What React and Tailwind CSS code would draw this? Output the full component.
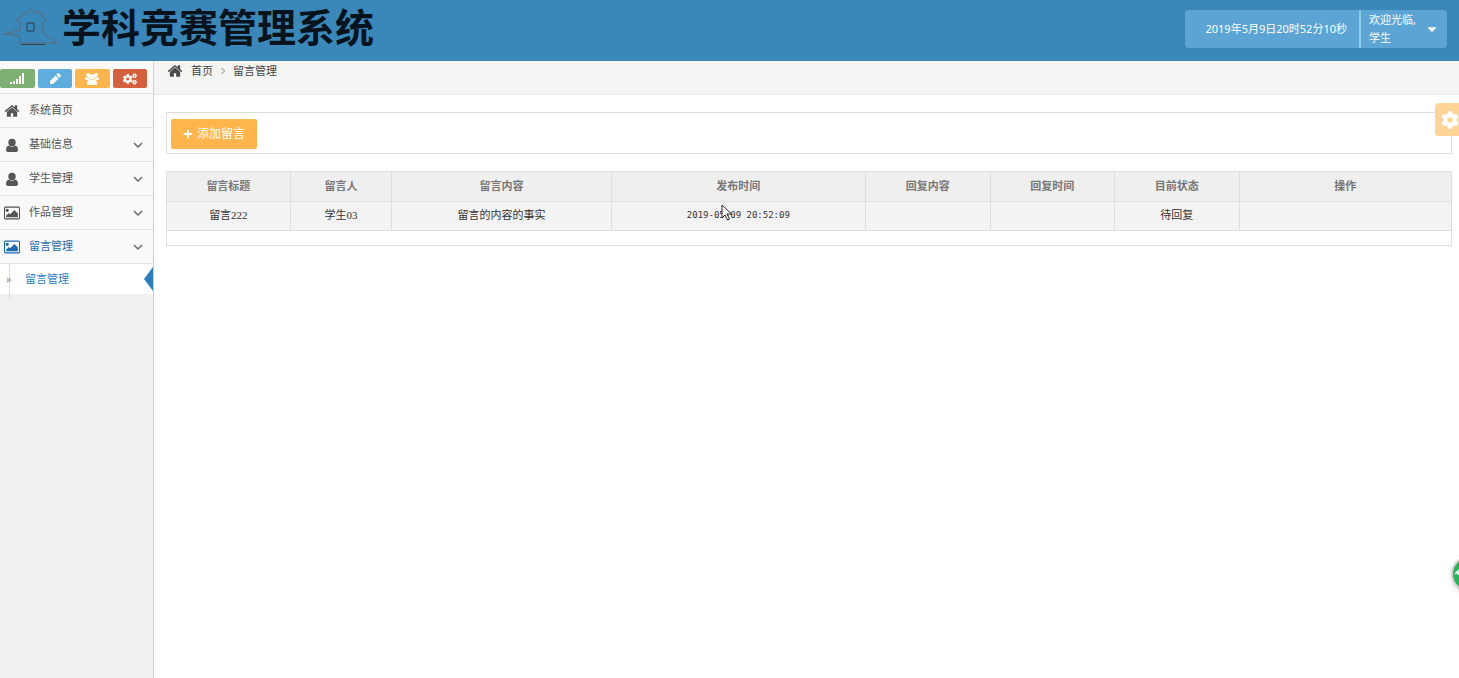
import React from "react";
import { FaCogs, FaCog, FaPlus, FaCaretDown } from "react-icons/fa";

const HomeIcon = ({ className }) => (
  <svg viewBox="0 0 1792 1792" fill="currentColor" className={className} aria-hidden="true">
    <path d="M1472 992v480q0 26-19 45t-45 19h-384v-384h-256v384h-384q-26 0-45-19t-19-45v-480q0-1 .5-3t.5-3l575-474 575 474q1 2 1 6zm223-69l-62 74q-8 9-21 11h-3q-13 0-21-7l-692-577-692 577q-12 8-24 7-13-2-21-11l-62-74q-8-10-7-23.5t11-21.5l719-599q32-26 76-26t76 26l244 204v-195q0-14 9-23t23-9h192q14 0 23 9t9 23v408l219 182q10 8 11 21.5t-7 23.5z" />
  </svg>
);

const PictureIcon = ({ className }) => (
  <svg viewBox="0 128 1920 1536" fill="currentColor" className={className} aria-hidden="true">
    <path d="M576 576q0 80-56 136t-136 56-136-56-56-136 56-136 136-56 136 56 56 136zm1088 384v448h-1408v-192l320-320 160 160 512-512zm96-704h-1600q-13 0-22.500 9.500t-9.500 22.500v1216q0 13 9.500 22.500t22.500 9.500h1600q13 0 22.500-9.500t9.500-22.500v-1216q0-13-9.500-22.500t-22.500-9.500zm160 32v1216q0 66-47 113t-113 47h-1600q-66 0-113-47t-47-113v-1216q0-66 47-113t113-47h1600q66 0 113 47t47 113z" />
  </svg>
);

const UserIcon = ({ className }) => (
  <svg viewBox="0 0 16 16" fill="currentColor" className={className} aria-hidden="true">
    <circle cx="8" cy="5.500" r="3.700" />
    <path d="M5 8.500Q2 9 2 13q0 2 2 2h8q2 0 2-2 0-4-3-4.500-3 2.500-6 0z" />
  </svg>
);

const SignalIcon = ({ className }) => (
  <svg viewBox="0 0 14 14" fill="currentColor" className={className} aria-hidden="true">
    <path d="M0 10h2v2H0zM3 9h2v3H3zM6 7h2v5H6zM9 4h2v8H9zM12 1h2v11h-2z" />
  </svg>
);

const PencilIcon = ({ className }) => (
  <svg viewBox="0 0 14 14" fill="currentColor" className={className} aria-hidden="true">
    <path d="M2 9l5.500-5.500 3 3L5 12H2zM8.300 2.700 9.600 1.400q.7-.6 1.400 0l1.600 1.600q.6.7 0 1.400l-1.300 1.300z" />
  </svg>
);

const GroupIcon = ({ className }) => (
  <svg viewBox="0 0 14 14" fill="currentColor" className={className} aria-hidden="true">
    <circle cx="3" cy="3" r="2" />
    <circle cx="11" cy="3" r="2" />
    <circle cx="7" cy="5" r="2.700" />
    <path d="M0 5q2 1 4 0 0 2 1 3H1Q0 8 0 7zM14 5q-2 1-4 0 0 2-1 3h4q1 0 1-1zM4.500 7.500Q7 9 9.500 7.500 12 8 12 11.500 12 13 10.500 13h-7Q2 13 2 11.500 2 8 4.500 7.500z" />
  </svg>
);

const AngleIcon = ({ className }) => (
  <svg viewBox="0 0 10 10" fill="none" stroke="currentColor" strokeWidth="1.400" className={className} aria-hidden="true">
    <path d="M1 3l4 4 4-4" />
  </svg>
);

const HouseLogo = () => (
  <svg viewBox="0 0 56 42" className="h-[42px] w-14 shrink-0" fill="none" stroke="#5b6a75" aria-hidden="true">
    <path d="M16 25V15l-4-1L27 3l5 4 3-2v3l3-2v5l4 4-3 1v11l14 10H15l1-5-2-3-14-1 14-3 2-2" />
    <path d="M23 17h7v8h-7z" stroke="#2b3c49" />
    <path d="M17 38.500h24" stroke="#33444f" />
  </svg>
);

const shortcuts = [
  { label: "统计", icon: SignalIcon, color: "bg-[#7fb073]" },
  { label: "编辑", icon: PencilIcon, color: "bg-[#5fadde]" },
  { label: "用户", icon: GroupIcon, color: "bg-[#ffb54b]" },
  { label: "设置", icon: FaCogs, color: "bg-[#d5603e]" },
];

const menu = [
  { label: "系统首页", icon: HomeIcon },
  { label: "基础信息", icon: UserIcon, sub: true },
  { label: "学生管理", icon: UserIcon, sub: true },
  { label: "作品管理", icon: PictureIcon, sub: true },
  { label: "留言管理", icon: PictureIcon, sub: true, active: true },
];

const columns = [
  { title: "留言标题", width: "w-[9.6%]" },
  { title: "留言人", width: "w-[7.9%]" },
  { title: "留言内容", width: "w-[17.1%]" },
  { title: "发布时间", width: "w-[19.8%]" },
  { title: "回复内容", width: "w-[9.7%]" },
  { title: "回复时间", width: "w-[9.7%]" },
  { title: "目前状态", width: "w-[9.7%]" },
  { title: "操作", width: "" },
];

const rows = [["留言222", "学生03", "留言的内容的事实", "2019-05-09 20:52:09", "", "", "待回复", ""]];

const Header = () => (
  <header className="flex h-[61px] items-start justify-between bg-[#3a87b9] pr-3">
    <div className="flex items-center pt-1.5 pl-1">
      <HouseLogo />
      <h1 className="pl-0.5 text-[39px] leading-10 font-bold text-[#07131c]">学科竞赛管理系统</h1>
    </div>
    <div className="mt-2.5 flex h-[38px] overflow-hidden rounded-sm bg-[#5ba4d4] text-[11px] text-white">
      <time className="flex w-[174px] items-center justify-end pr-3">2019年5月9日20时52分10秒</time>
      <button className="flex w-[88px] items-center justify-between border-l-2 border-[#8acbe9] pr-2 pl-2 text-left leading-[18px]">
        <span>
          欢迎光临,
          <br />
          学生
        </span>
        <FaCaretDown className="size-3.5" />
      </button>
    </div>
  </header>
);

const Sidebar = () => (
  <aside className="w-[154px] shrink-0 border-r border-[#cfcfcf] bg-[#f0f1f2]">
    <div className="flex h-[33px] items-end gap-[3px] border-b border-[#e4e4e4] bg-[#fafafa] pr-1.5 pb-[5px]">
      {shortcuts.map(({ label, icon: Icon, color }) => (
        <button
          key={label}
          aria-label={label}
          className={`flex h-[19px] flex-1 items-center justify-center rounded-xs text-white ${color}`}
        >
          <Icon className="size-3.5" />
        </button>
      ))}
    </div>
    <nav>
      <ul>
        {menu.map(({ label, icon: Icon, sub, active }) => (
          <li key={label}>
            <a
              href="#"
              className={`flex h-[34px] items-center border-b border-[#e4e4e4] bg-[#f9f9f9] pr-2.5 pl-1 ${
                active ? "text-[#1d6cb0]" : "text-[#555]"
              }`}
            >
              <span className="flex w-[25px]">
                <Icon className="size-4" />
              </span>
              <span className="flex-1">{label}</span>
              {sub && <AngleIcon className="size-2.5 text-[#666]" />}
            </a>
          </li>
        ))}
      </ul>
      <a href="#" className="relative flex h-[30px] items-center bg-white pl-1.5 text-[#2b82c9]">
        <span className="absolute top-0 left-[9px] h-9 border-l border-dotted border-[#a9cbe4]" />
        <span className="relative w-[19px] text-[#a08f88]">»</span>
        留言管理
        <svg viewBox="0 0 9 24" className="absolute right-0 h-6 w-[9px]" fill="#2b7dbc" aria-hidden="true">
          <path d="M9 0v24L0 12z" />
        </svg>
      </a>
    </nav>
  </aside>
);

const Breadcrumb = () => (
  <nav className="flex h-[34px] items-start border-b border-[#e8e8e8] bg-[#f4f4f3] pt-0.5 pl-[13px] leading-4 text-[#444]">
    <HomeIcon className="mr-2 size-4 text-[#4c4c4c]" />
    <a href="#">首页</a>
    <AngleIcon className="mx-1.5 mt-1 size-2 -rotate-90 text-[#aaa]" />
    <span>留言管理</span>
  </nav>
);

const MessageTable = () => (
  <div className="mt-[17px] border border-[#e0e0e0] pb-3.5">
    <table className="w-full table-fixed border-collapse text-center">
      <thead>
        <tr className="h-[29px] border-b border-[#dedede] bg-[#efefef] text-[#777]">
          {columns.map(({ title, width }) => (
            <th key={title} className={`border-r border-[#dedede] font-bold last:border-r-0 ${width}`}>
              {title}
            </th>
          ))}
        </tr>
      </thead>
      <tbody className="font-['Liberation_Serif','Noto_Sans_CJK_SC',serif] text-[#333]">
        {rows.map((row, i) => (
          <tr key={i} className="h-[29px] border-b border-[#dedede] bg-[#f3f3f3]">
            {row.map((cell, j) => (
              <td
                key={j}
                className={`border-r border-[#dedede] last:border-r-0 ${
                  j === 3 ? "font-['DejaVu_Sans_Mono',monospace] text-[9px]" : ""
                }`}
              >
                {cell}
              </td>
            ))}
          </tr>
        ))}
      </tbody>
    </table>
  </div>
);

const App = () => (
  <div className="relative flex min-h-screen flex-col overflow-hidden bg-white font-['Noto_Sans','Noto_Sans_CJK_SC',sans-serif] text-[11px]">
    <Header />
    <div className="flex flex-1">
      <Sidebar />
      <main className="min-w-0 flex-1">
        <Breadcrumb />
        <div className="pt-[17px] pr-[7px] pl-3">
          <div className="border border-[#dedede] px-1 pt-1.5 pb-1">
            <button className="flex h-[30px] items-center gap-1 rounded-xs bg-[#ffb54b] px-3 text-xs text-white">
              <FaPlus className="size-2.5" />
              添加留言
            </button>
          </div>
          <MessageTable />
        </div>
      </main>
    </div>

    {/* Theme settings */}
    <button
      aria-label="主题设置"
      className="absolute top-[103px] right-0 flex h-[33px] w-6 items-center overflow-hidden rounded-l-sm bg-[#ffd391]/95 pl-1.5 text-white"
    >
      <FaCog className="size-[18px] shrink-0" />
    </button>

    {/* Floating helper */}
    <button
      aria-label="助手"
      className="absolute top-[556px] -right-7 flex size-9 items-center rounded-full border-2 border-[#d4d4d4] bg-[#2fb05a] text-white shadow-md"
    >
      <svg viewBox="0 0 12 12" className="size-3" fill="none" stroke="currentColor" strokeWidth="1.500" aria-hidden="true">
        <path d="M2 6 5 3v3h7" />
      </svg>
    </button>

    {/* Pointer */}
    <svg viewBox="0 0 12 18" className="absolute top-[204px] left-[721px] h-[18px] w-3" fill="white" stroke="#222" aria-hidden="true">
      <path d="M1 1v13l3-3 2.500 5 2-1-2.500-5h4.500z" />
    </svg>
  </div>
);

export default App;
